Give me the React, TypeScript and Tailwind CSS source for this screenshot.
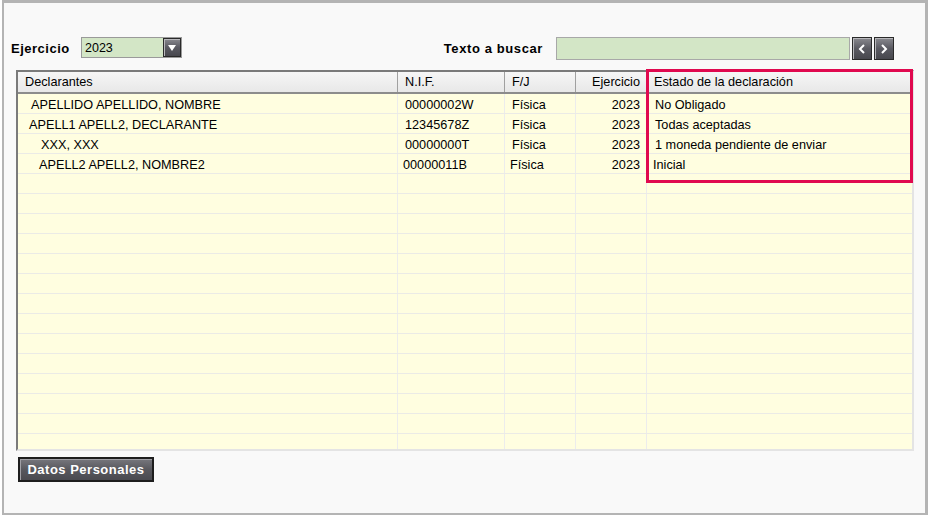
import React from "react";

const rows = [
  { d: "APELLIDO APELLIDO, NOMBRE", dp: "pl-[13px]", n: "00000002W", np: "pl-[7px]", f: "pl-[7px]", e: "2023", s: "No Obligado", sp: "pl-[8px]" },
  { d: "APELL1 APELL2, DECLARANTE", dp: "pl-[11px]", n: "12345678Z", np: "pl-[7px]", f: "pl-[7px]", e: "2023", s: "Todas aceptadas", sp: "pl-[8px]" },
  { d: "XXX, XXX", dp: "pl-[23px]", n: "00000000T", np: "pl-[7px]", f: "pl-[7px]", e: "2023", s: "1 moneda pendiente de enviar", sp: "pl-[8px]" },
  { d: "APELL2 APELL2, NOMBRE2", dp: "pl-[21px]", n: "00000011B", np: "pl-[5px]", f: "pl-[5px]", e: "2023", s: "Inicial", sp: "pl-[6px]" },
];

const empty = Array.from({ length: 14 });

function DarkBtn({ children, className }: { children: React.ReactNode; className?: string }) {
  return (
    <div
      className={
        "flex items-center justify-center border border-[#2a2a2a] bg-gradient-to-b from-[#8a8a90] via-[#5a5a62] to-[#48484e] shadow-[inset_1px_1px_0_#b8b8bc] " +
        (className ?? "")
      }
    >
      {children}
    </div>
  );
}

export default function App() {
  return (
    <div className="w-[928px] h-[515px] bg-white pl-[2px] overflow-hidden font-['Liberation_Sans',Arial,sans-serif] text-black">
      <div className="h-full border-l-2 border-t-[3px] border-r-[3px] border-b-2 border-[#b4b4b4] bg-[#f9f9f9] flex flex-col">
        {/* top bar */}
        <div className="mt-[34px] h-[23px] flex items-center pl-[7px] pr-[31px]">
          <div className="w-[70px] text-[13px] font-bold tracking-[0.5px]">Ejercicio</div>
          <div className="w-[101px] h-[21px] flex border border-[#9a9a9a] bg-[#d3e6c6] mb-[2px]">
            <div className="flex-1 text-[12.5px] leading-[20px] pl-[3px]">2023</div>
            <DarkBtn className="w-[18px] h-full">
              <svg width="10" height="8" viewBox="0 0 10 8">
                <path d="M1 1 L9 1 L5 7 Z" fill="#ffffff" />
              </svg>
            </DarkBtn>
          </div>
          <div className="ml-auto mr-[13px] text-[13px] font-bold tracking-[0.6px]">Texto a buscar</div>
          <div className="w-[294px] h-[23px] border border-[#a8a8a8] bg-[#d3e6c6]" />
          <DarkBtn className="ml-[2px] w-[20px] h-[23px]">
            <svg width="8" height="10" viewBox="0 0 8 10">
              <path d="M6 1 L2 5 L6 9" stroke="#fff" strokeWidth="2" fill="none" />
            </svg>
          </DarkBtn>
          <DarkBtn className="ml-[2px] w-[20px] h-[23px]">
            <svg width="8" height="10" viewBox="0 0 8 10">
              <path d="M2 1 L6 5 L2 9" stroke="#fff" strokeWidth="2" fill="none" />
            </svg>
          </DarkBtn>
        </div>

        {/* table */}
        <div className="relative ml-[12px] mt-[10px] w-[898px] h-[381px] border-t-2 border-l-2 border-t-[#7a7a7a] border-l-[#7a7a7a] border-r-2 border-b-2 border-r-[#e4e4e4] border-b-[#e4e4e4] bg-[#fffee0] text-[12.7px]">
          <div className="h-full overflow-hidden flex flex-col">
            <div className="h-[22px] shrink-0 flex bg-gradient-to-b from-[#f6f6f6] to-[#e8e8e8] border-b-2 border-[#8c8c8c] leading-[21px]">
              <div className="w-[380px] pl-[7px] border-r border-[#a0a0a0]">Declarantes</div>
              <div className="w-[107px] pl-[7px] border-r border-[#a0a0a0]">N.I.F.</div>
              <div className="w-[71px] pl-[7px] border-r border-[#a0a0a0]">F/J</div>
              <div className="w-[71px] pr-[6px] text-right border-r border-[#a0a0a0]">Ejercicio</div>
              <div className="flex-1 pl-[7px]">Estado de la declaración</div>
            </div>
            {rows.map((r, i) => (
              <div key={i} className="h-[20px] shrink-0 flex border-b border-[#ebebe6] leading-[22px]">
                <div className={"w-[380px] border-r border-[#ececec] whitespace-nowrap " + r.dp}>{r.d}</div>
                <div className={"w-[107px] border-r border-[#ececec] " + r.np}>{r.n}</div>
                <div className={"w-[71px] border-r border-[#ececec] " + r.f}>Física</div>
                <div className="w-[71px] pr-[6px] text-right border-r border-[#ececec]">{r.e}</div>
                <div className={"flex-1 whitespace-nowrap " + r.sp}>{r.s}</div>
              </div>
            ))}
            {empty.map((_, i) => (
              <div key={i} className="h-[20px] shrink-0 flex border-b border-[#ebebe6]">
                <div className="w-[380px] border-r border-[#ececec]" />
                <div className="w-[107px] border-r border-[#ececec]" />
                <div className="w-[71px] border-r border-[#ececec]" />
                <div className="w-[71px] border-r border-[#ececec]" />
                <div className="flex-1" />
              </div>
            ))}
          </div>
          <div className="absolute left-[628px] top-[-3px] w-[267px] h-[114px] border-[3px] border-[#e0094f]" />
        </div>

        {/* bottom button */}
        <div className="ml-[14px] mt-[6px]">
          <div className="w-[136px] h-[25px] flex items-center justify-center border-2 border-[#1e1e1e] bg-gradient-to-b from-[#77777d] via-[#58585e] to-[#4a4a50] shadow-[inset_1px_1px_0_#a0a0a6] text-white text-[13px] font-bold tracking-[0.5px]">
            Datos Personales
          </div>
        </div>
      </div>
    </div>
  );
}
